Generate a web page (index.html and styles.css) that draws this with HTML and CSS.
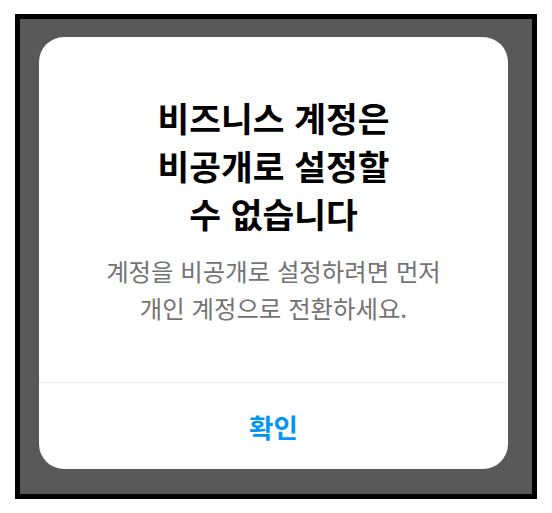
FILE: index.html
```html
<!DOCTYPE html>
<html lang="ko">
  <head>
    <meta charset="UTF-8" />
    <meta name="viewport" content="width=device-width, initial-scale=1.0" />
    <title>비공개 계정</title>
    <link rel="stylesheet" href="styles.css">
  </head>
  <body>
    <div class="frame">
      <div class="dialog">
        <div class="dialog-body">
          <h1 class="dialog-title">비즈니스 계정은<br />비공개로 설정할<br />수 없습니다</h1>
          <p class="dialog-text">계정을 비공개로 설정하려면 먼저<br />개인 계정으로 전환하세요.</p>
        </div>
        <button class="dialog-btn">확인</button>
      </div>
    </div>
  </body>
</html>
```

FILE: styles.css
```css
body {
  margin: 0;
  padding: 0;
  background: #fff;
  font-family: "Noto Sans CJK KR", "Noto Sans", sans-serif;
}

.frame {
  box-sizing: border-box;
  width: 522px;
  height: 485px;
  margin: 14px 0 0 15px;
  background: #595959;
  border: 5px solid #000;
  padding: 18px 24px 25px 19px;
}

.dialog {
  background: #fff;
  border-radius: 25px;
  height: 100%;
  display: flex;
  flex-direction: column;
}

.dialog-body {
  flex: 1;
  padding-top: 56px;
  text-align: center;
}

.dialog-title {
  margin: 0;
  font-size: 34.5px;
  line-height: 48px;
  font-weight: bold;
  color: #000;
}

.dialog-text {
  margin: 15px 0 0;
  font-size: 24.4px;
  line-height: 37px;
  color: #737373;
}

.dialog-btn {
  height: 87px;
  border: none;
  border-top: 1px solid #ececec;
  background: none;
  font-family: inherit;
  font-size: 26.5px;
  font-weight: bold;
  color: #0095f6;
  padding: 0;
}
```
